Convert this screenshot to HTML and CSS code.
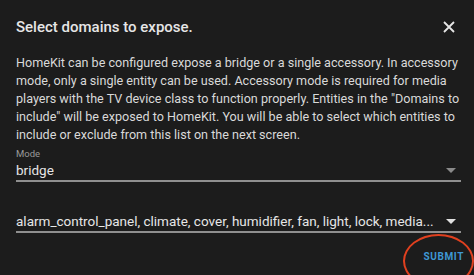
FILE: index.html
```html
<!DOCTYPE html>
<html>
<head>
<meta charset="utf-8">
<link rel="stylesheet" href="styles.css">
</head>
<body>
<div class="dialog">
  <div class="header">
    <h2 class="title">Select domains to expose.</h2>
    <svg class="close" viewBox="0 0 12 12" width="12" height="12"><path d="M1 1L11 11M11 1L1 11" stroke="#e6e6e6" stroke-width="1.8" fill="none"/></svg>
  </div>
  <p class="desc">HomeKit can be configured expose a bridge or a single accessory. In accessory mode, only a single entity can be used. Accessory mode is required for media players with the TV device class to function properly. Entities in the "Domains to include" will be exposed to HomeKit. You will be able to select which entities to include or exclude from this list on the next screen.</p>
  <div class="field">
    <div class="label">Mode</div>
    <div class="row">
      <span class="value">bridge</span>
      <span class="arrow arrow-dim"></span>
    </div>
  </div>
  <div class="field field-plain">
    <div class="row">
      <span class="value">alarm_control_panel, climate, cover, humidifier, fan, light, lock, media...</span>
      <span class="arrow"></span>
    </div>
  </div>
  <div class="actions">
    <span class="submit">SUBMIT</span>
    <span class="circle"></span>
  </div>
</div>
</body>
</html>
```
FILE: styles.css
```css
html, body {
  margin: 0;
  padding: 0;
  background: #1c1c1c;
  height: 275px;
  overflow: hidden;
}
.dialog {
  font-family: Roboto, "Liberation Sans", sans-serif;
  color: #e1e1e1;
  padding: 0 13px 0 16px;
}
.header {
  display: flex;
  align-items: center;
  justify-content: space-between;
  height: 54px;
  padding-right: 6px;
}
.title {
  margin: 0;
  font-size: 15px;
  font-weight: 500;
  color: #e6e6e6;
}
.close { display: block; }
.desc {
  margin: 0 -8px 0 0;
  font-size: 12.6px;
  line-height: 18px;
  color: #d9d9d9;
}
.field {
  margin-top: 4px;
  border-bottom: 2px solid #8f8f8f;
}
.label {
  font-size: 9.5px;
  color: #9a9a9a;
  line-height: 12px;
}
.row {
  display: flex;
  align-items: center;
  justify-content: space-between;
  height: 20px;
}
.value {
  font-size: 13.5px;
  color: #e6e6e6;
  white-space: nowrap;
  overflow: hidden;
  text-overflow: ellipsis;
  min-width: 0;
}
.arrow {
  flex: none;
  width: 0;
  height: 0;
  border-left: 5px solid transparent;
  border-right: 5px solid transparent;
  border-top: 5px solid #e0e0e0;
  margin: 0 5px 0 12px;
}
.arrow-dim { border-top-color: #8a8a8a; }
.field-plain {
  margin-top: 29px;
}
.actions {
  position: relative;
  display: flex;
  justify-content: flex-end;
  padding-top: 17px;
}
.submit {
  font-size: 10px;
  line-height: 14px;
  font-weight: 700;
  letter-spacing: 0.6px;
  color: #3f97d3;
  margin-right: -3px;
}
.circle {
  position: absolute;
  left: 387px;
  top: 1px;
  width: 67px;
  height: 50px;
  border: 2px solid #e0401f;
  border-radius: 50%;
}
```
